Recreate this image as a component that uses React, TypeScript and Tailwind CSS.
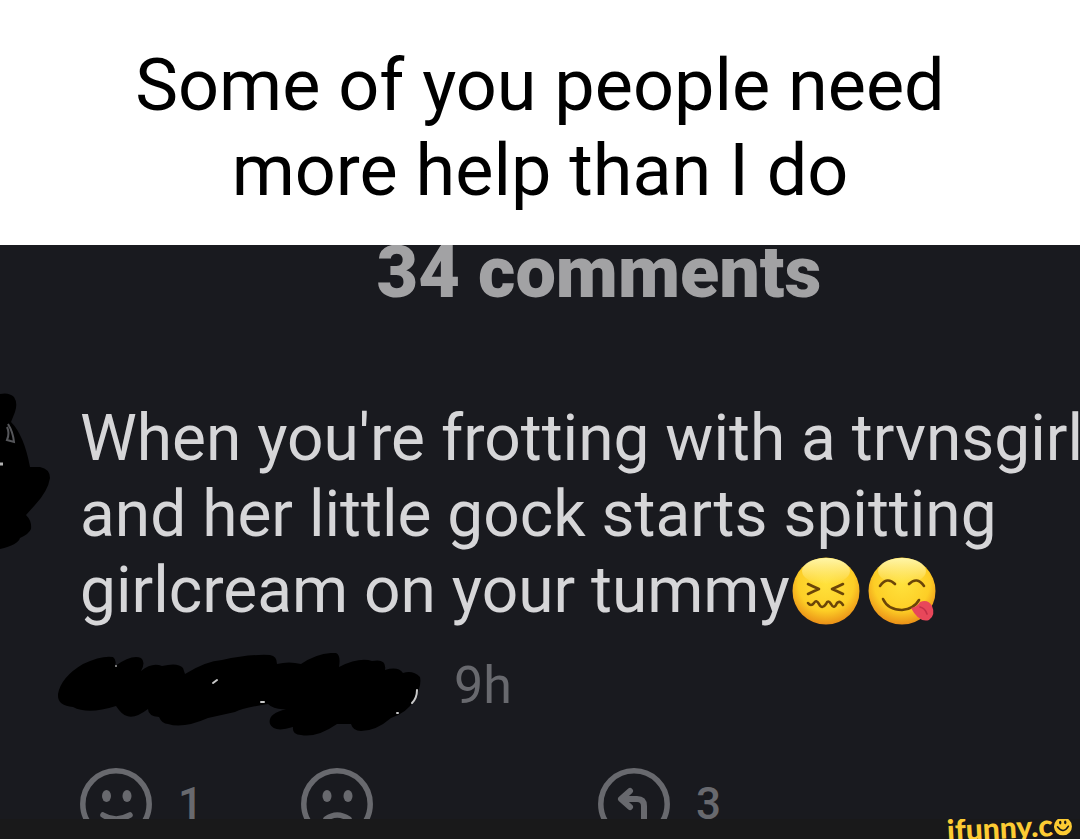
import type { ReactNode } from "react";

const COMMENT_LINES = [
  "When you're frotting with a trvnsgirl",
  "and her little gock starts spitting",
];

function ConfoundedFace() {
  return (
    <svg viewBox="0 0 68 68" className="h-[68px] w-[68px] shrink-0" role="img" aria-label="Confounded face">
      <defs>
        <radialGradient id="confounded" cx="50%" cy="38%" r="64%">
          <stop offset="0" stopColor="#ffe23c" />
          <stop offset="0.65" stopColor="#fdce26" />
          <stop offset="1" stopColor="#e88a16" />
        </radialGradient>
        <linearGradient id="confounded-shine" x1="0" y1="0" x2="0" y2="1">
          <stop offset="0" stopColor="#fff6a8" />
          <stop offset="1" stopColor="#fff6a8" stopOpacity="0" />
        </linearGradient>
      </defs>
      <circle cx="34" cy="34" r="33.5" fill="url(#confounded)" />
      <ellipse cx="34" cy="14" rx="24" ry="13" fill="url(#confounded-shine)" />
      <g fill="none" stroke="#6b4508" strokeWidth="2.6" strokeLinecap="round" strokeLinejoin="round">
        <path d="M16 27 Q22 30 27 32 Q22 34 16 37" />
        <path d="M51 27 Q45 30 40 32 Q45 34 51 37" />
        <path d="M16 46 Q19 50 22 46 Q24 42 27 47 Q30 53 34 47 Q36 42 39 47 Q42 53 45 46 Q48 43 51 48" />
      </g>
    </svg>
  );
}

function SavoringFace() {
  return (
    <svg viewBox="0 0 68 68" className="h-[68px] w-[68px] shrink-0" role="img" aria-label="Face savoring food">
      <defs>
        <radialGradient id="savoring" cx="50%" cy="38%" r="64%">
          <stop offset="0" stopColor="#ffe23c" />
          <stop offset="0.65" stopColor="#fdce26" />
          <stop offset="1" stopColor="#e88a16" />
        </radialGradient>
        <linearGradient id="savoring-shine" x1="0" y1="0" x2="0" y2="1">
          <stop offset="0" stopColor="#fff6a8" />
          <stop offset="1" stopColor="#fff6a8" stopOpacity="0" />
        </linearGradient>
      </defs>
      <circle cx="34" cy="34" r="33.5" fill="url(#savoring)" />
      <ellipse cx="34" cy="14" rx="24" ry="13" fill="url(#savoring-shine)" />
      <g fill="none" stroke="#6b4508" strokeWidth="2.6" strokeLinecap="round">
        <path d="M12 29 Q19 19 27 27" />
        <path d="M41 27 Q49 19 56 29" />
        <path d="M15 42 Q20 53 34 53 Q46 52 51 43" />
      </g>
      <path d="M43 51 Q49 50 52 45 Q60 42 64 49 Q68 58 61 63 Q51 66 43 51 Z" fill="#e8475a" />
      <path d="M52 50 Q57 51 59 57" fill="none" stroke="#c42f48" strokeWidth="1.6" strokeLinecap="round" />
    </svg>
  );
}

function AvatarScribble() {
  return (
    <svg viewBox="0 0 80 160" className="h-[160px] w-20 shrink-0" aria-hidden="true">
      <path
        d="M0 1 Q9 -1 14 4 Q18 10 15 19 L11 29 Q24 42 30 74 L40 74 Q50 76 50 85 Q48 98 35 112 L26 122 Q32 128 31 136 Q29 141 20 145 Q18 152 0 156 Z"
        fill="#000"
      />
      <path d="M8 31 Q13 39 14 49 L7 47 Q10 40 7 34" fill="none" stroke="#55565a" strokeWidth="2" />
      <path d="M0 71 H3" stroke="#b0b0b0" strokeWidth="3" />
    </svg>
  );
}

function NameScribble() {
  return (
    <svg viewBox="0 0 366 84" className="h-[84px] w-[366px] shrink-0" aria-hidden="true">
      <path
        d="M2 41 Q5 24 27 11 Q46 2 57 4 Q61 7 59 13 Q76 1 85 5 Q90 9 85 18 Q96 9 106 13 Q122 9 127 15 L129 21 Q150 8 166 7 Q193 1 214 2 Q221 3 221 11 Q233 8 245 11 Q263 -1 280 0 Q285 2 283 14 Q303 4 316 8 Q331 5 329 17 Q342 13 347 20 Q357 17 364 24 Q366 34 358 47 Q352 59 335 65 Q320 78 305 78 Q297 78 295 71 L281 71 Q261 85 245 82 Q236 82 237 74 Q218 80 214 71 Q211 61 230 56 Q218 57 212 51 Q186 55 179 59 L152 65 Q127 76 112 71 Q106 71 103 64 Q92 63 92 56 Q79 66 71 63 Q66 62 60 53 Q32 62 17 54 Q1 53 2 41 Z"
        fill="#000"
      />
      <g fill="none" stroke="#c9c9c9" strokeWidth="2" strokeLinecap="round">
        <path d="M157 30 L161 27" />
        <path d="M205 49 H208" />
        <path d="M361 37 Q361 45 356 50" />
        <path d="M341 60 L342 60" />
      </g>
      <path d="M59 13 H61" stroke="#777" strokeWidth="2" />
    </svg>
  );
}

function RoundIcon({ children }: { children: ReactNode }) {
  return (
    <svg
      viewBox="0 0 72 72"
      className="h-[72px] w-[72px]"
      fill="none"
      stroke="currentColor"
      strokeWidth="5.5"
      strokeLinecap="round"
      strokeLinejoin="round"
      aria-hidden="true"
    >
      <circle cx="36" cy="36" r="33.2" />
      {children}
    </svg>
  );
}

function Reactions() {
  return (
    <div className="flex h-[51px] items-start overflow-hidden pl-20 text-[44px] leading-[72px] font-medium text-[#68696e]">
      <button type="button" aria-label="Smile, 1" className="flex w-[221px] gap-[26px]">
        <RoundIcon>
          <ellipse cx="26.5" cy="28" rx="4.5" ry="6" fill="currentColor" stroke="none" />
          <ellipse cx="47" cy="28" rx="4.5" ry="6" fill="currentColor" stroke="none" />
          <path d="M23 47 Q36 55 50 47" />
        </RoundIcon>
        <span>1</span>
      </button>
      <button type="button" aria-label="Frown" className="flex w-[297px]">
        <RoundIcon>
          <ellipse cx="26" cy="28" rx="4.5" ry="6" fill="currentColor" stroke="none" />
          <ellipse cx="47" cy="28" rx="4.5" ry="6" fill="currentColor" stroke="none" />
          <path d="M25 51 Q36 43 48 51" />
        </RoundIcon>
      </button>
      <button type="button" aria-label="Reply, 3" className="flex gap-[26px]">
        <RoundIcon>
          <path d="M32 23 L23 31 L32 39 M24 31 H39 Q46 31 46 38 V55" strokeWidth="6" />
        </RoundIcon>
        <span>3</span>
      </button>
    </div>
  );
}

function Watermark() {
  return (
    <footer className="flex h-5 justify-end overflow-hidden bg-[#19191a] pr-2">
      <div className="flex h-2 origin-bottom-right -rotate-3 items-center gap-px text-[#fccb33]">
        <span className="font-[Lato,sans-serif] text-[30px] leading-2 font-black">ifunny.c</span>
        <svg viewBox="0 0 18 18" className="mt-1.5 h-[18px] w-[18px]" aria-hidden="true">
          <circle cx="9" cy="9" r="9" fill="currentColor" />
          <ellipse cx="6.5" cy="5" rx="1.2" ry="1.8" fill="#19191a" />
          <ellipse cx="11.5" cy="5" rx="1.2" ry="1.8" fill="#19191a" />
          <path d="M3.5 9 Q9 17 14.5 9" fill="none" stroke="#19191a" strokeWidth="1.5" strokeLinecap="round" />
        </svg>
      </div>
    </footer>
  );
}

export default function App() {
  return (
    <main className="overflow-hidden bg-[#191a1f] font-[Roboto,sans-serif]">
      <header className="bg-white px-20 pt-[43px] pb-8">
        <h1 className="text-center text-[72px] leading-[85px] text-black">
          Some of you people need
          <br />
          more help than I do
        </h1>
      </header>

      <section>
        <h2 className="h-[60px] overflow-hidden pl-[118px] text-center text-[72px] leading-[56px] font-black text-[#a2a2a4]">
          34 comments
        </h2>

        <article className="pt-[88px]">
          <div className="flex">
            <AvatarScribble />
            <div className="pt-2 text-[64px] leading-[76px] whitespace-nowrap text-[#d6d6d8]">
              {COMMENT_LINES.map((line) => (
                <p key={line}>{line}</p>
              ))}
              <p className="flex items-center gap-2">
                <span className="-mr-1.5">girlcream on your tummy</span>
                <ConfoundedFace />
                <SavoringFace />
              </p>
            </div>
          </div>
          <div className="mt-6 flex items-start gap-8 pl-14">
            <NameScribble />
            <time className="text-[52px] leading-[66px] text-[#68696e]">9h</time>
          </div>
        </article>

        <div className="pt-[31px]">
          <Reactions />
        </div>
      </section>

      <Watermark />
    </main>
  );
}
